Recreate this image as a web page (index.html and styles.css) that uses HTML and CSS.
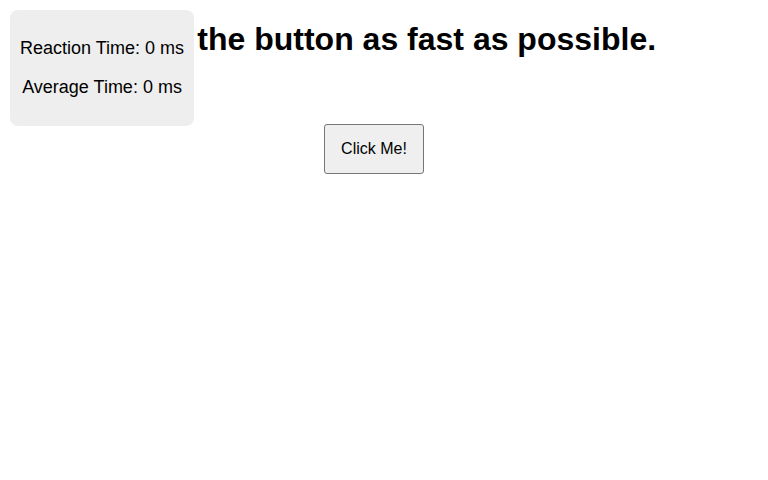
FILE: index.html
```html
<!DOCTYPE html>
<html>
<head>
<meta charset="utf-8">
<link rel="stylesheet" href="styles.css">
</head>
<body>
<h1 class="title">Click the button as fast as possible.</h1>
<div class="actions">
  <button class="btn">Click Me!</button>
</div>
<div class="stats">
  <p class="stat">Reaction Time: 0 ms</p>
  <p class="stat">Average Time: 0 ms</p>
</div>
</body>
</html>
```

FILE: styles.css
```css
html, body {
  margin: 0;
  padding: 0;
  background: #fff;
}
body {
  font-family: "Liberation Sans", Arial, sans-serif;
  color: #000;
  text-align: center;
  padding-top: 21px;
}
.title {
  font-size: 32px;
  font-weight: bold;
  margin: 0;
  line-height: 37px;
}
.actions {
  margin-top: 66px;
}
.btn {
  font-family: "Liberation Sans", Arial, sans-serif;
  font-size: 16px;
  line-height: 18px;
  padding: 15px 16px;
  margin-right: 20px;
  background: #efefef;
  border: 1px solid #767676;
  border-radius: 3px;
  color: #000;
}
.stats {
  position: absolute;
  top: 10px;
  left: 10px;
  padding: 10px;
  background: #eeeeee;
  border-radius: 8px;
  white-space: nowrap;
}
.stat {
  font-size: 18px;
  line-height: 21px;
  margin: 18px 0;
}
```
